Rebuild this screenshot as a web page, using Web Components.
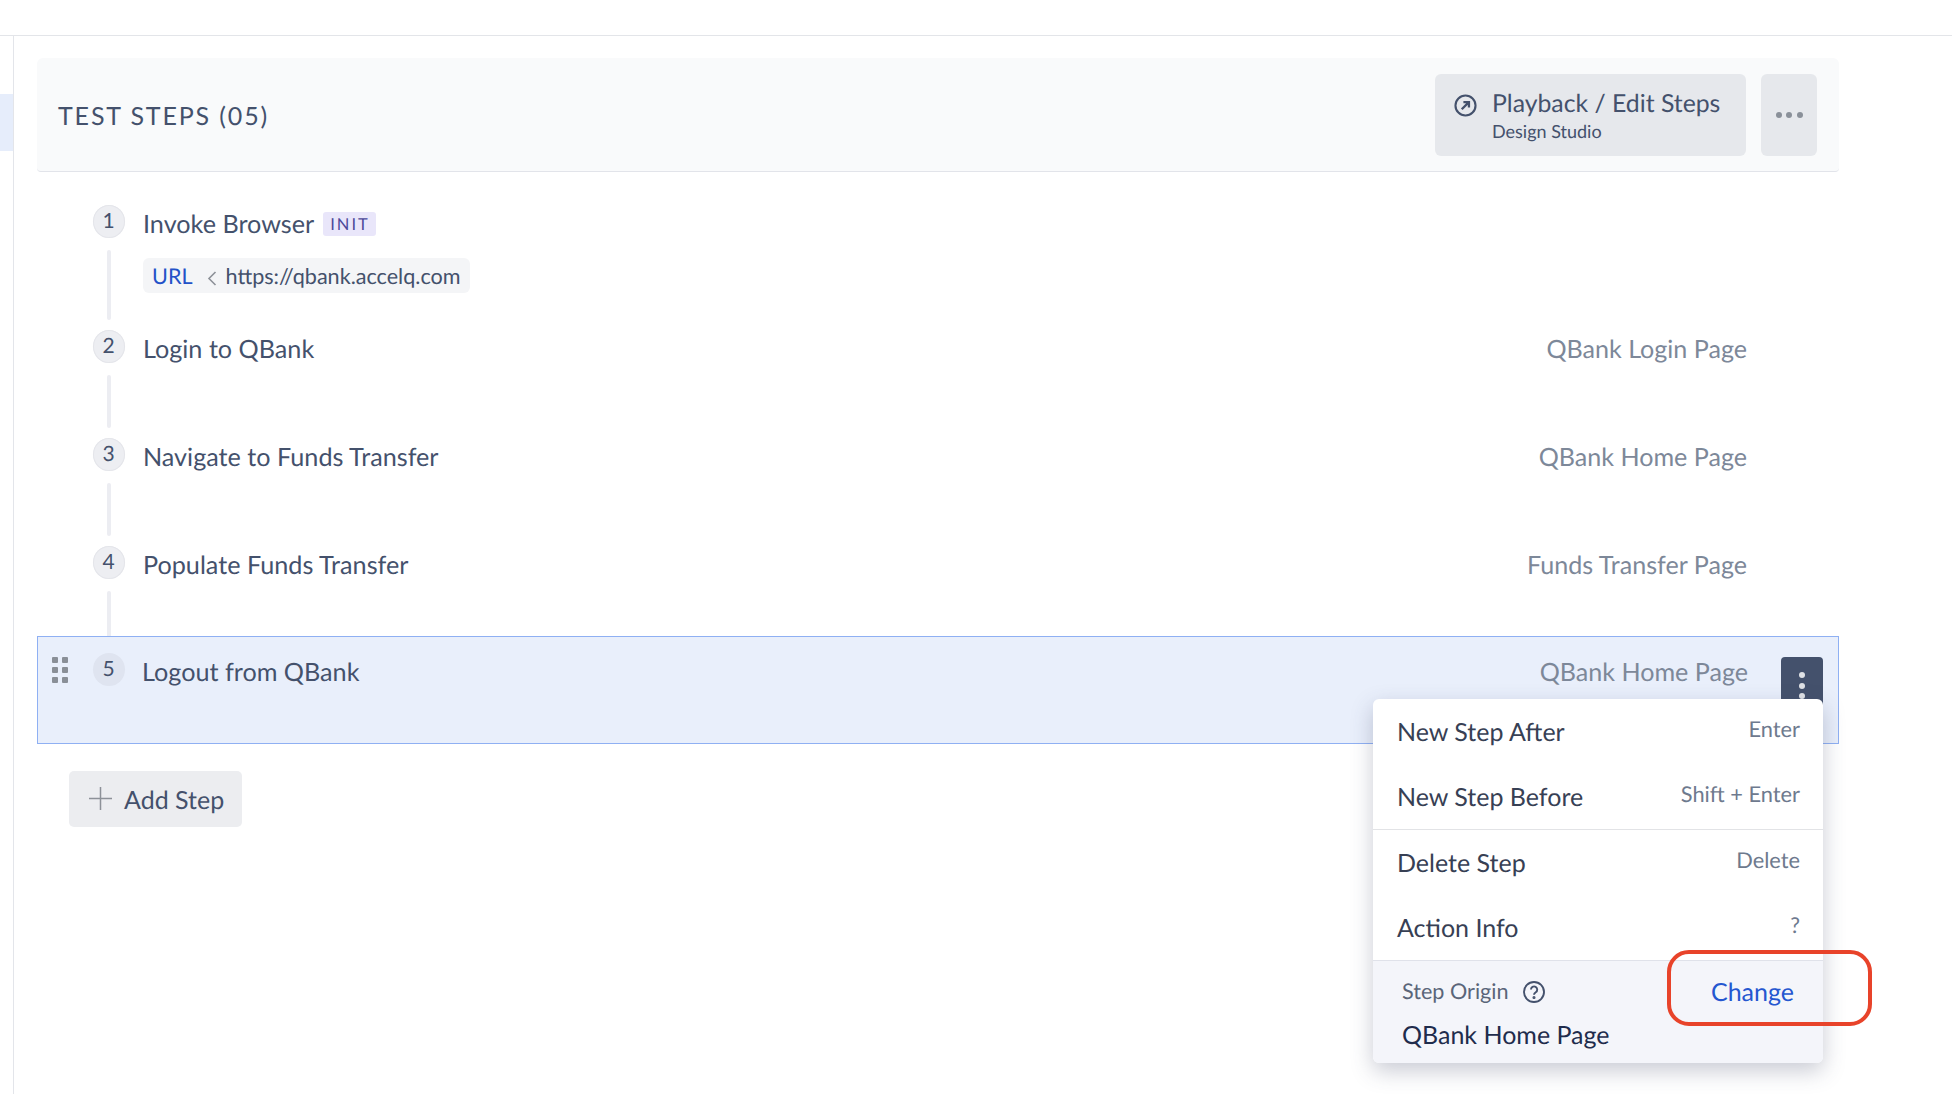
<!DOCTYPE html>
<html><head><meta charset="utf-8"><style>
html,body{margin:0;height:1094px;overflow:hidden;background:#fff;font-family:Lato,"Open Sans",sans-serif;color:#44516c;text-rendering:geometricPrecision}
</style></head><body>
<app-shell>
  <steps-header title="TEST STEPS (05)"></steps-header>
  <step-list>
    <test-step n="1" name="Invoke Browser" tag="INIT" kind="first"><url-param></url-param></test-step>
    <test-step n="2" name="Login to QBank" page="QBank Login Page"></test-step>
    <test-step n="3" name="Navigate to Funds Transfer" page="QBank Home Page"></test-step>
    <test-step n="4" name="Populate Funds Transfer" page="Funds Transfer Page"></test-step>
    <test-step n="5" name="Logout from QBank" page="QBank Home Page" selected><step-menu slot="overlay"></step-menu></test-step>
  </step-list>
  <add-step></add-step>
</app-shell>
<script>
function def(name,html){
  customElements.define(name,class extends HTMLElement{
    constructor(){super();this.attachShadow({mode:'open'});}
    connectedCallback(){
      const a=k=>this.getAttribute(k)||'';
      this.shadowRoot.innerHTML=typeof html==='function'?html(a,this):html;
    }
  });
}
def('app-shell',`<style>
:host{display:block;height:1094px;box-sizing:border-box}
.top{height:35px;border-bottom:1px solid #e3e5e9}
.body{display:flex;height:1058px}
.rail{width:14px;box-sizing:border-box;border-right:1px solid #e3e5ea;padding-top:58px;flex:none}
.rail i{display:block;height:57px;background:#e6edfb}
main{flex:none;width:1802px;margin-left:23px;padding-top:22px}
</style><div class="top"></div><div class="body"><div class="rail"><i></i></div><main><slot></slot></main></div>`);

def('steps-header',a=>`<style>
:host{display:flex;align-items:center;justify-content:space-between;height:114px;box-sizing:border-box;background:#f9fafb;border-bottom:1px solid #e2e4ea;border-radius:6px 6px 4px 4px;padding:0 22px 0 21px}
h1{margin:2px 0 0;font:400 25px Lato,sans-serif;letter-spacing:1.85px;color:#44516c}
.acts{display:flex;gap:15px;height:82px}
.pb{width:311px;background:#e6e8ec;border-radius:6px;display:flex;box-sizing:border-box;padding:15px 0 0 19px}
.pb svg{width:23px;height:23px;margin-top:5px;flex:none}
.t{margin-left:15px;line-height:1}
.t b{display:block;font:400 24.8px/29px Lato,sans-serif;color:#44516c}
.t span{display:block;font:400 18px/21px Lato,sans-serif;color:#44516c;margin-top:3px}
.more{width:56px;background:#e6e8ec;border-radius:6px;display:flex;align-items:center;justify-content:center;gap:4.5px}
.more i{width:6px;height:6px;border-radius:50%;background:#8a9099}
</style><h1>${a('title')}</h1><div class="acts"><div class="pb"><svg viewBox="0 0 22 22" fill="none" stroke="#44516c"><circle cx="11" cy="11" r="9.6" stroke-width="2"/><path d="M7.4 14.6 14 8M9 7.7h5.3V13" stroke-width="2.2"/></svg><div class="t"><b>Playback / Edit Steps</b><span>Design Studio</span></div></div><div class="more"><i></i><i></i><i></i></div></div>`);

def('step-list',`<style>:host{display:block;padding-top:15px}</style><slot></slot>`);

def('test-step',(a,el)=>{
 const sel=el.hasAttribute('selected'),first=a('kind')==='first';
 const h=first?125:108;
 return `<style>
:host{display:block;position:relative;height:${h}px;box-sizing:border-box;${sel?'background:#e9effb;border:1px solid #8fb0f3;':''}}
.row{display:grid;grid-template-columns:${sel?'54px 33px 1fr auto auto':'33px 1fr auto auto'};height:100%;box-sizing:border-box;padding:${sel?16:18}px ${sel?15:16}px 0 ${sel?0:55}px}
.handle{display:grid;grid-template-columns:6px 6px;grid-auto-rows:6px;gap:4px 3.5px;padding:4px 0 0 14px}
.handle i{background:#8a8f97;border-radius:1px}
.lc{display:flex;flex-direction:column;align-items:center;height:${h-10}px}
.n{width:32px;height:33px;border-radius:50%;background:${sel?'#dfe4f0':'#edeef2'};${sel?'':'box-shadow:inset 0 0 0 1px #e4e5ea;'}font:400 21px/31px Lato,sans-serif;text-align:center;color:#44516c;flex:none}
.c{width:4px;margin-top:12px;flex:1;background:#ecedf2;border-radius:2px}
.mid{padding-left:${sel?17:18}px;min-width:0}
.name{font:400 25.2px/38px Lato,sans-serif;color:#44516c;display:flex;align-items:center}
.tag{font:400 16.5px/24px Lato,sans-serif;letter-spacing:2px;background:#e9e6fa;color:#4d4a9a;border-radius:3px;padding:0 6px 0 7px;margin-left:9px;margin-top:-1px}
.page{font:400 25.1px/38px Lato,sans-serif;color:#7d8899;white-space:nowrap${sel?';margin-right:-1px':''}}
.kc{margin-left:34px;width:42px}
.kebab{width:42px;height:52px;margin-top:4px;background:#44516c;border-radius:4px 4px 0 0;display:flex;flex-direction:column;align-items:center;gap:4.5px;padding-top:15px;box-sizing:border-box}
.kebab i{width:6px;height:6px;border-radius:50%;background:#dfe1e5;flex:none}
</style>
<div class="row">
${sel?'<div class="handle"><i></i><i></i><i></i><i></i><i></i><i></i></div>':''}
<div class="lc"><div class="n">${a('n')}</div>${sel?'':'<div class="c"></div>'}</div>
<div class="mid"><div class="name">${a('name')}${a('tag')?`<span class="tag">${a('tag')}</span>`:''}</div><slot></slot></div>
<div class="page">${a('page')}</div>
<div class="kc">${sel?'<div class="kebab"><i></i><i></i><i></i></div>':''}</div>
</div><slot name="overlay"></slot>`});

def('url-param',`<style>
:host{display:inline-flex;align-items:center;height:35px;margin-top:15px;background:#f4f5f7;border-radius:6px;padding:0 9px;font:400 21.6px Lato,sans-serif;color:#44516c}
b{font-weight:400;color:#2352c8}
svg{width:10px;height:16px;margin:5px 9px 0 14px}
</style><b>URL</b><svg viewBox="0 0 10 16" fill="none" stroke="#8d9198" stroke-width="1.6"><path d="M8.5 2 2 8.5 8.5 15"/></svg><span>https://qbank.accelq.com</span>`);

def('add-step',`<style>
:host{display:block;width:fit-content;margin:27px 0 0 32px}
.c{display:flex;align-items:center;width:173px;height:56px;box-sizing:border-box;background:#ecedf0;border-radius:5px;padding:2px 0 0 19px;font:400 25px Lato,sans-serif;color:#44516c}
svg{width:25px;height:25px;margin-right:11px;margin-top:-4px}
</style><div class="c"><svg viewBox="0 0 25 25" stroke="#8d9198" stroke-width="1.5"><path d="M12.5 1v23M1 12.5h23"/></svg>Add Step</div>`);

def('menu-item',a=>`<style>
:host{display:flex;justify-content:space-between;height:65px;box-sizing:border-box;padding:11px 23px 0 24px}
.l{font:400 25px/44px Lato,sans-serif;color:#374054}
.r{font:400 21.8px/38px Lato,sans-serif;color:#6e7a8e}
</style><span class="l">${a('label')}</span><span class="r">${a('key')}</span>`);

def('step-menu',`<style>
:host{position:absolute;left:1335px;top:62px;width:450px;height:364px;box-sizing:border-box;background:#fff;border-radius:6px;box-shadow:0 8px 22px rgba(60,70,100,.28);display:flex;flex-direction:column;z-index:5}
.g{height:131px;border-bottom:1px solid #e2e3e6;flex:none;box-sizing:border-box}
.g.b{height:131px;border-bottom:1px solid #e0e2ea}
.o{flex:1;background:#f4f5fa;border-radius:0 0 6px 6px;padding:12px 29px 0 29px;position:relative}
.a{display:flex;justify-content:space-between;align-items:center;height:36px}
.la{display:flex;align-items:center;font:400 21.6px Lato,sans-serif;color:#5a6579}
.la svg{width:24px;height:24px;margin-left:13px;margin-top:2px}
.ch{font:400 25px Lato,sans-serif;color:#2557d0;margin-top:2px}
.v{font:400 25px/36px Lato,sans-serif;color:#1f2c4c;margin-top:8px}
.red{position:absolute;left:294px;top:-11px;width:205px;height:76px;box-sizing:border-box;border:4px solid #e8432a;border-radius:22px}
</style>
<div class="g"><menu-item label="New Step After" key="Enter"></menu-item><menu-item label="New Step Before" key="Shift + Enter"></menu-item></div>
<div class="g b"><menu-item label="Delete Step" key="Delete"></menu-item><menu-item label="Action Info" key="?"></menu-item></div>
<div class="o"><div class="a"><span class="la">Step Origin<svg viewBox="0 0 23 23" fill="none" stroke="#44516c" stroke-width="1.8"><circle cx="11.5" cy="11.5" r="9.6"/><path d="M8.6 9.2a3 3 0 1 1 4.6 2.5c-1.1.7-1.7 1.2-1.7 2.5"/><circle cx="11.5" cy="16.8" r=".6" fill="#44516c"/></svg></span><span class="ch">Change</span></div><div class="v">QBank Home Page</div><div class="red"></div></div>`);
</script></body></html>
